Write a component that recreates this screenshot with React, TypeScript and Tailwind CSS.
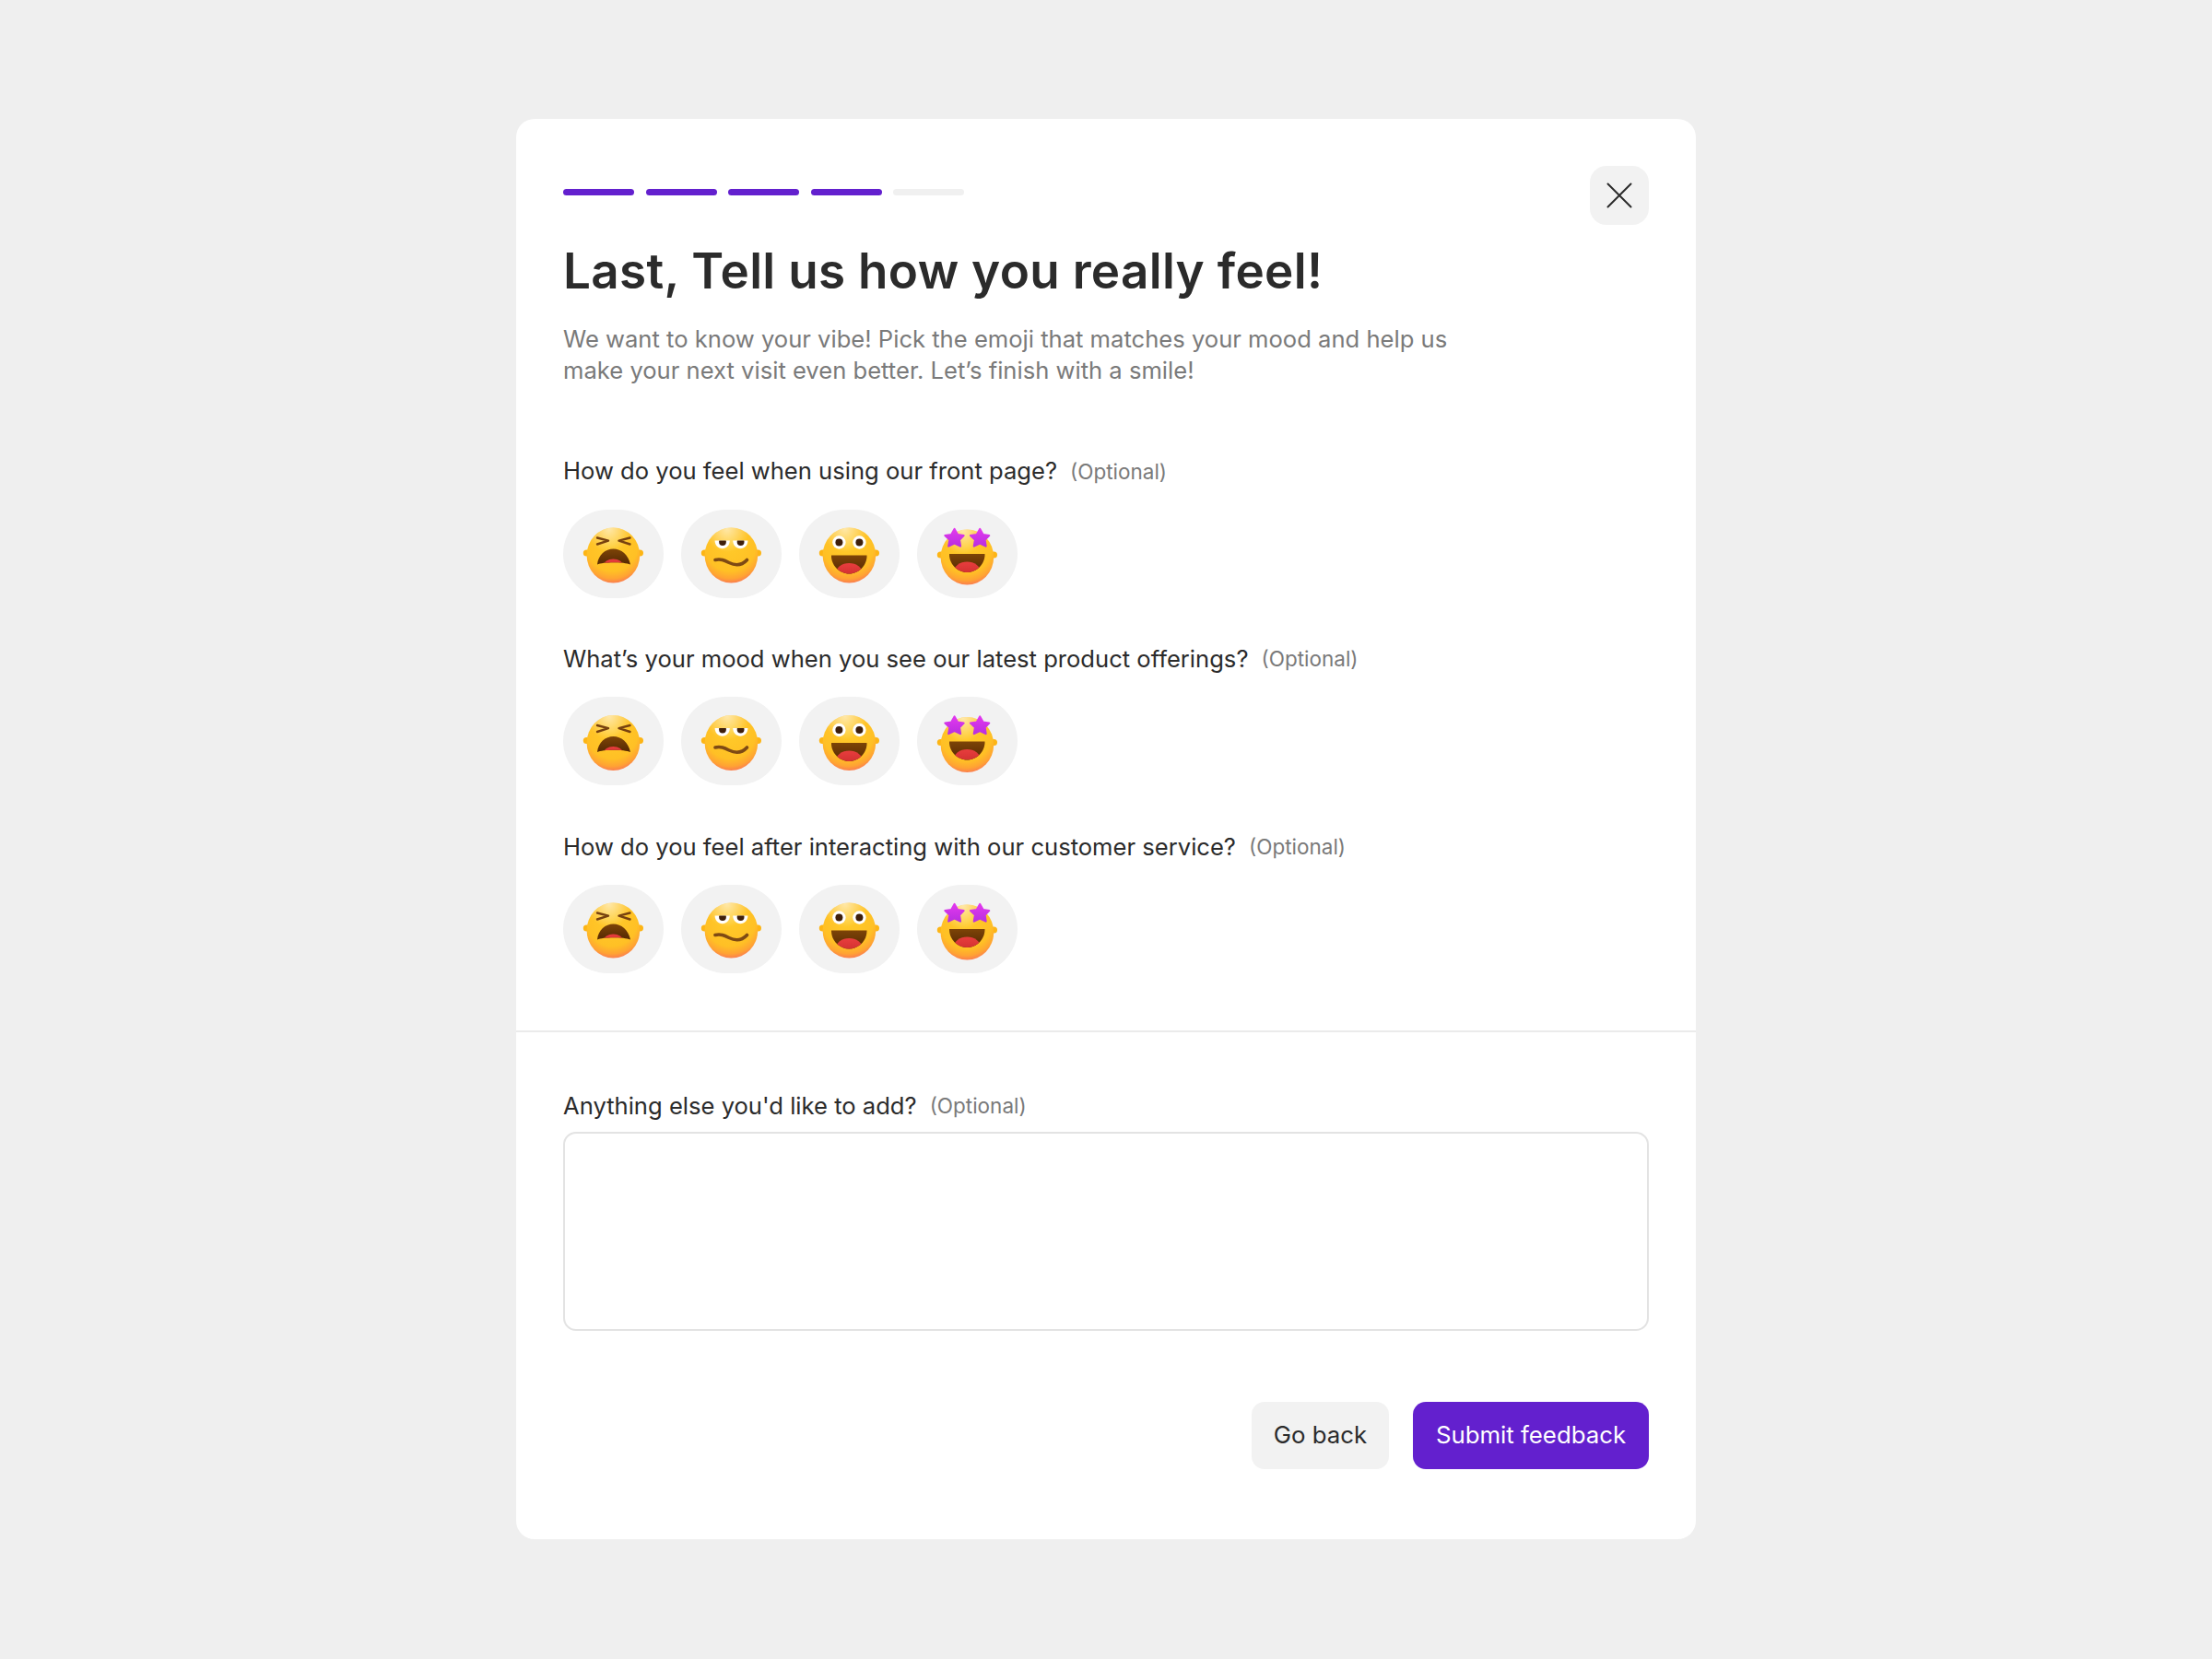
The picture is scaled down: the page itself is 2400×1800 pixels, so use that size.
import { useId } from "react";

type Kind = "tired" | "meh" | "happy" | "star";

function Emoji({ kind, dy = 0 }: { kind: Kind; dy?: number }) {
  const id = useId();
  const cy = kind === "star" ? 51.5 : 49.5;
  const earY = cy - 2.5;
  return (
    <svg width="109" height="96" viewBox="0 0 109 96" fill="none" className="blur-[0.4px]">
      <defs>
        <radialGradient id={`${id}f`} cx="0.48" cy="0.3" r="0.74">
          <stop offset="0" stopColor="#ffcb2a" />
          <stop offset="0.66" stopColor="#ffc025" />
          <stop offset="0.84" stopColor="#ffa333" />
          <stop offset="1" stopColor="#f96c5c" />
        </radialGradient>
        <radialGradient id={`${id}h`} cx="0.42" cy="0.02" r="0.42">
          <stop offset="0" stopColor="#fff" stopOpacity="0.6" />
          <stop offset="1" stopColor="#fff" stopOpacity="0" />
        </radialGradient>
        <linearGradient id={`${id}m`} x1="0" y1="0" x2="0" y2="1">
          <stop offset="0" stopColor="#7d4407" />
          <stop offset="1" stopColor="#552803" />
        </linearGradient>
        <linearGradient id={`${id}t`} x1="0" y1="0" x2="0" y2="1">
          <stop offset="0" stopColor="#e83d3d" />
          <stop offset="1" stopColor="#c22828" />
        </linearGradient>
        <linearGradient id={`${id}s`} x1="0" y1="0" x2="0" y2="1">
          <stop offset="0" stopColor="#e238ee" />
          <stop offset="1" stopColor="#b92fe0" />
        </linearGradient>
        <clipPath id={`${id}c`}>
          {kind === "tired" && <path d="M37 59.5C38 49 46 42.5 54.5 42.5S71 49 73 59.5C66 56.5 43 56.5 37 59.5Z" />}
          {(kind === "happy" || kind === "star") && (
            <path d={kind === "happy" ? "M35 49.5H73.5C74 60 65 69.5 54.3 69.5S34.5 60 35 49.5Z" : "M35 48H73.5C74 58.5 65 68 54.3 68S34.5 58.5 35 48Z"} />
          )}
          {kind === "meh" && <path d="M36 33.6H74V46H36Z" />}
        </clipPath>
      </defs>
      <g transform={`translate(0 ${dy})`}>
        <circle cx="25.4" cy={earY} r="3.6" fill="#fdb515" />
        <circle cx="83.4" cy={earY} r="3.6" fill="#fdb515" />
        <ellipse cx="54.4" cy={cy} rx="28.8" ry="30" fill={`url(#${id}f)`} />
        <ellipse cx="54.4" cy={cy} rx="28.8" ry="30" fill={`url(#${id}h)`} />
        {kind === "tired" && (
          <>
            <path d="M37 30.5L49 33.6L37 37.5M72.5 30.5L60.5 33.6L72.5 37.5" stroke="#77410f" strokeWidth="2.4" strokeLinecap="round" strokeLinejoin="round" />
            <path d="M37 59.5C38 49 46 42.5 54.5 42.5S71 49 73 59.5C66 56.5 43 56.5 37 59.5Z" fill={`url(#${id}m)`} />
            <g clipPath={`url(#${id}c)`}>
              <ellipse cx="54.4" cy="60" rx="10.5" ry="6.5" fill={`url(#${id}t)`} />
            </g>
          </>
        )}
        {kind === "meh" && (
          <>
            <path d="M36.6 33.6H52.8C52.8 38.6 49.2 42.2 44.7 42.2S36.6 38.6 36.6 33.6Z" fill="#fff" />
            <path d="M56.2 33.6H72.4C72.4 38.6 68.8 42.2 64.3 42.2S56.2 38.6 56.2 33.6Z" fill="#fff" />
            <g clipPath={`url(#${id}c)`}>
              <circle cx="45" cy="35" r="3.9" fill="#3f200c" />
              <circle cx="64.6" cy="35" r="3.9" fill="#3f200c" />
            </g>
            <path d="M37 54.5C43 53 47 55 52 57.5C58 60.5 65 61.5 71.5 54.5" stroke="#7e4a14" strokeWidth="3.6" strokeLinecap="round" />
          </>
        )}
        {kind === "happy" && (
          <>
            <circle cx="43.4" cy="35.5" r="7.2" fill="#fff" />
            <circle cx="65.4" cy="35.5" r="7.2" fill="#fff" />
            <circle cx="43.4" cy="35.5" r="4" fill="#3f200c" />
            <circle cx="65.4" cy="35.5" r="4" fill="#3f200c" />
            <path d="M35 49.5H73.5C74 60 65 69.5 54.3 69.5S34.5 60 35 49.5Z" fill={`url(#${id}m)`} />
            <g clipPath={`url(#${id}c)`}>
              <ellipse cx="54.3" cy="69" rx="14.5" ry="11" fill={`url(#${id}t)`} />
            </g>
          </>
        )}
        {kind === "star" && (
          <>
            <path d="M40.6 21L44 27L50.6 28L46 32.8L47 39.6L40.6 36.6L34.2 39.6L35.4 32.8L30.4 28L37.2 27Z" fill={`url(#${id}s)`} stroke={`url(#${id}s)`} strokeWidth="2.2" strokeLinejoin="round" />
            <path d="M68.2 21L71.6 27L78.2 28L73.6 32.8L74.6 39.6L68.2 36.6L61.8 39.6L63 32.8L58 28L64.8 27Z" fill={`url(#${id}s)`} stroke={`url(#${id}s)`} strokeWidth="2.2" strokeLinejoin="round" />
            <path d="M35 48H73.5C74 58.5 65 68 54.3 68S34.5 58.5 35 48Z" fill={`url(#${id}m)`} />
            <g clipPath={`url(#${id}c)`}>
              <ellipse cx="54.3" cy="67.5" rx="14.5" ry="11" fill={`url(#${id}t)`} />
            </g>
          </>
        )}
      </g>
    </svg>
  );
}

function EmojiRow({ dy }: { dy: number }) {
  const kinds: Kind[] = ["tired", "meh", "happy", "star"];
  return (
    <div className="mt-[24px] flex gap-[19px]">
      {kinds.map((k) => (
        <button key={k} className="h-[96px] w-[109px] rounded-[48px] bg-[#f2f2f2]">
          <Emoji kind={k} dy={dy} />
        </button>
      ))}
    </div>
  );
}

function Label({ text }: { text: string }) {
  return (
    <div className="flex h-[34px] items-center gap-[14px]">
      <span className="text-[25.6px] text-[#2b2b2b]">{text}</span>
      <span className="text-[22.5px] text-[#7a7a7a]">(Optional)</span>
    </div>
  );
}

export default function App() {
  const questions = [
    "How do you feel when using our front page?",
    "What’s your mood when you see our latest product offerings?",
    "How do you feel after interacting with our customer service?",
  ];
  return (
    <div className="flex h-[1800px] items-center justify-center bg-[#efefef] pb-[2px] font-['Inter','Liberation_Sans',sans-serif]">
      <div className="h-[1541px] w-[1280px] rounded-[20px] bg-white">
        <div className="border-b-2 border-[#ebebeb] px-[51px] pb-[62px] pt-[51px]">
          <div className="flex items-start justify-between">
            <div>
              <div className="mt-[25px] flex gap-[12.6px]">
                {[0, 1, 2, 3].map((i) => (
                  <div key={i} className="h-[7px] w-[77px] rounded-full bg-[#6320ce]" />
                ))}
                <div className="h-[7px] w-[77px] rounded-full bg-[#f0f0f0]" />
              </div>
              <h1 className="mt-[52px] text-[53px] font-semibold leading-[60px] tracking-[0.32px] text-[#2b2b2b]">
                Last, Tell us how you really feel!
              </h1>
              <p className="mt-[27px] w-[980px] text-[25.6px] leading-[34px] text-[#7a7a7a]">
                We want to know your vibe! Pick the emoji that matches your mood and help us make your next visit even better. Let’s finish with a smile!
              </p>
            </div>
            <button className="flex h-[64px] w-[64px] items-center justify-center rounded-[18px] bg-[#f2f2f2]">
              <svg width="28" height="28" viewBox="0 0 28 28" fill="none">
                <path d="M1.5 1.5L26.5 26.5M26.5 1.5L1.5 26.5" stroke="#2b2b2b" strokeWidth="2" strokeLinecap="round" />
              </svg>
            </button>
          </div>
          <div className="mt-[76px] flex flex-col gap-[49.6px]">
            {questions.map((q, i) => (
              <div key={q}>
                <Label text={q} />
                <EmojiRow dy={i === 1 ? 0.5 : 0} />
              </div>
            ))}
          </div>
        </div>
        <div className="px-[51px] pt-[63px]">
          <Label text="Anything else you'd like to add?" />
          <div className="mt-[11px] h-[216px] rounded-[14px] border-2 border-[#e3e3e3] bg-white" />
          <div className="mt-[77px] flex justify-end gap-[26px]">
            <button className="h-[73px] w-[149px] rounded-[14px] bg-[#f2f2f2] text-[25.8px] text-[#2b2b2b]">Go back</button>
            <button className="h-[73px] w-[256px] rounded-[14px] bg-[#6320ce] text-[25.8px] text-white">Submit feedback</button>
          </div>
        </div>
      </div>
    </div>
  );
}
